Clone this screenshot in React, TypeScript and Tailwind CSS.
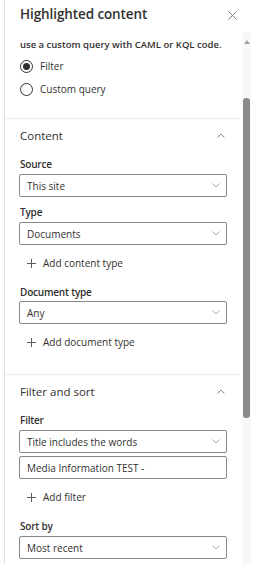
const font = { fontFamily: '"Open Sans", "Noto Sans", Arial, sans-serif' }

function ChevronDownIcon() {
  return (
    <svg width="8" height="5" viewBox="0 0 8 5" fill="none">
      <path d="M0.5 0.5 L4 4 L7.5 0.5" stroke="#aeaba8" strokeWidth="1" />
    </svg>
  )
}

function ChevronUpIcon() {
  return (
    <svg width="8" height="5" viewBox="0 0 8 5" fill="none">
      <path d="M0.5 4.5 L4 1 L7.5 4.5" stroke="#8a8886" strokeWidth="1" />
    </svg>
  )
}

function PlusIcon() {
  return (
    <svg width="9" height="9" viewBox="0 0 9 9" fill="none" className="ml-[8px] mr-[7px]">
      <path d="M4.5 0 V9 M0 4.5 H9" stroke="#605e5c" strokeWidth="1" />
    </svg>
  )
}

function Dropdown({ value, className = '' }: { value: string; className?: string }) {
  return (
    <div
      className={`h-[23px] w-[208px] flex items-center justify-between border border-[#8a8886] rounded-[2px] pl-[7px] pr-[6px] text-[10px] text-[#323130] ${className}`}
    >
      <span className="leading-[14px]">{value}</span>
      <ChevronDownIcon />
    </div>
  )
}

function TextField({ value, className = '' }: { value: string; className?: string }) {
  return (
    <div
      className={`h-[23px] w-[208px] flex items-center border border-[#8a8886] rounded-[2px] pl-[7px] text-[10px] text-[#323130] ${className}`}
    >
      <span className="leading-[14px]">{value}</span>
    </div>
  )
}

function Label({ text, className = '' }: { text: string; className?: string }) {
  return (
    <div className={`h-[14px] ml-[1px] text-[10px] leading-[14px] font-semibold tracking-[-0.2px] text-[#323130] ${className}`}>
      {text}
    </div>
  )
}

function AddRow({ text, className = '' }: { text: string; className?: string }) {
  return (
    <div className={`h-[16px] flex items-center text-[10px] text-[#323130] ${className}`}>
      <PlusIcon />
      <span className="leading-[14px]">{text}</span>
    </div>
  )
}

function SectionHeader({ title, className = '' }: { title: string; className?: string }) {
  return (
    <div className={`h-[16px] w-[208px] flex items-center justify-between ml-[1px] ${className}`}>
      <span className="text-[11.5px] leading-[16px] text-[#323130]">{title}</span>
      <span className="mr-[3px] mb-[2px]">
        <ChevronUpIcon />
      </span>
    </div>
  )
}

function Radio({ label, checked, className = '' }: { label: string; checked?: boolean; className?: string }) {
  return (
    <div className={`h-[14px] flex items-center ml-[1px] ${className}`}>
      <div className="w-[13px] h-[13px] rounded-full border border-[#323130] flex items-center justify-center">
        {checked && <div className="w-[7px] h-[7px] rounded-full bg-[#323130]" />}
      </div>
      <span className="ml-[7px] text-[10px] leading-[14px] text-[#323130]">{label}</span>
    </div>
  )
}

export default function App() {
  return (
    <div className="w-[261px] h-[573px] bg-white overflow-hidden" style={font}>
      <div className="ml-[4px] w-[247px] h-[564px] border-l border-[#e1dfdd] flex flex-col">
        {/* Header */}
        <div className="h-[32px] flex items-start justify-between pl-[15px] pr-[14px] pt-[5px]">
          <h1 className="text-[13.5px] leading-[18px] font-semibold tracking-[-0.1px] text-[#323130]">
            Highlighted content
          </h1>
          <svg width="9" height="9" viewBox="0 0 9 9" fill="none" className="mt-[6px]">
            <path d="M0.5 0.5 L8.5 8.5 M8.5 0.5 L0.5 8.5" stroke="#7d6a86" strokeWidth="0.9" />
          </svg>
        </div>

        <div className="flex flex-1 min-h-0">
          {/* Scroll content */}
          <div className="flex-1 flex flex-col overflow-hidden">
            <div className="pl-[14px]">
              <div className="mt-[6px] h-[14px] ml-[1px] text-[9.5px] leading-[14px] font-semibold text-[#323130] whitespace-nowrap">
                use a custom query with CAML or KQL code.
              </div>
              <Radio label="Filter" checked className="mt-[7px]" />
              <Radio label="Custom query" className="mt-[9px]" />
            </div>

            <div className="mt-[22px] mr-[2px] h-[1px] bg-[#edebe9]" />

            <div className="pl-[14px]">
              <SectionHeader title="Content" className="mt-[9px]" />
              <Label text="Source" className="mt-[13px]" />
              <Dropdown value="This site" className="mt-[3px]" />
              <Label text="Type" className="mt-[8px]" />
              <Dropdown value="Documents" className="mt-[3px]" />
              <AddRow text="Add content type" className="mt-[10px]" />
              <Label text="Document type" className="mt-[14px]" />
              <Dropdown value="Any" className="mt-[2px]" />
              <AddRow text="Add document type" className="mt-[10px]" />
            </div>

            <div className="mt-[24px] mr-[2px] h-[1px] bg-[#edebe9]" />

            <div className="pl-[14px]">
              <SectionHeader title="Filter and sort" className="mt-[9px]" />
              <Label text="Filter" className="mt-[13px]" />
              <Dropdown value="Title includes the words" className="mt-[3px]" />
              <TextField value="Media Information TEST -" className="mt-[3px]" />
              <AddRow text="Add filter" className="mt-[10px]" />
              <Label text="Sort by" className="mt-[14px]" />
              <Dropdown value="Most recent" className="mt-[3px]" />
            </div>
          </div>

          {/* Scrollbar */}
          <div className="w-[9px] bg-[#f8f8f8] flex flex-col items-center">
            <svg width="6" height="4" viewBox="0 0 6 4" className="mt-[8px]">
              <path d="M3 0 L6 4 L0 4 Z" fill="#a3a3a3" />
            </svg>
            <div className="mt-[54px] w-[7px] h-[320px] rounded-[3px] bg-[#8b8b8b]" />
          </div>
        </div>
      </div>
    </div>
  )
}
